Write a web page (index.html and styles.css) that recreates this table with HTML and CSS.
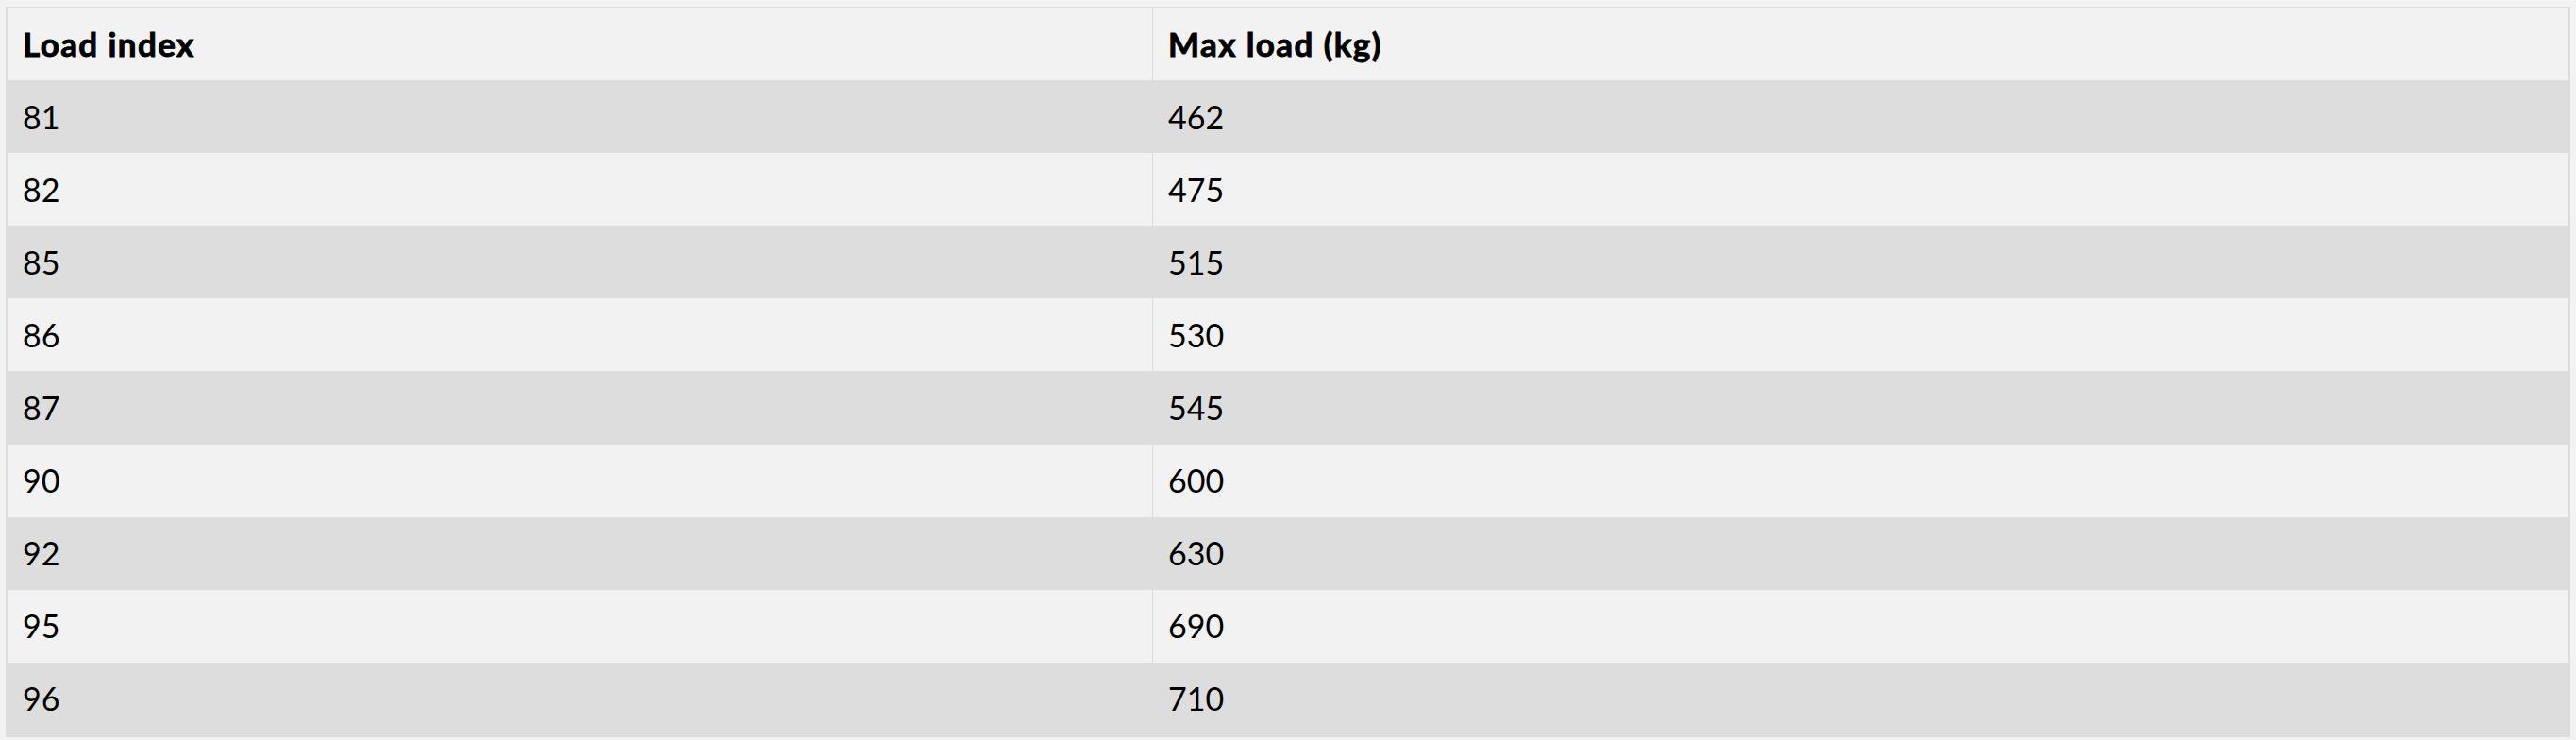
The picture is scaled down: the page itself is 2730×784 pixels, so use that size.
FILE: index.html
```html
<!DOCTYPE html>
<html lang="en">
<head>
<meta charset="utf-8">
<title>Load index</title>
<link rel="stylesheet" href="styles.css">
</head>
<body>
<table class="load-table">
  <colgroup>
    <col class="col-index">
    <col class="col-load">
  </colgroup>
  <thead>
    <tr><th>Load index</th><th>Max load (kg)</th></tr>
  </thead>
  <tbody>
    <tr><td>81</td><td>462</td></tr>
    <tr><td>82</td><td>475</td></tr>
    <tr><td>85</td><td>515</td></tr>
    <tr><td>86</td><td>530</td></tr>
    <tr><td>87</td><td>545</td></tr>
    <tr><td>90</td><td>600</td></tr>
    <tr><td>92</td><td>630</td></tr>
    <tr><td>95</td><td>690</td></tr>
    <tr><td>96</td><td>710</td></tr>
  </tbody>
</table>
</body>
</html>
```
FILE: styles.css
```css
html, body {
  margin: 0;
  padding: 0;
  background: #f2f2f2;
}
body {
  padding: 7px 0 0 6px;
  font-family: Lato, "Open Sans", "Liberation Sans", sans-serif;
  color: #000;
}
.load-table {
  width: 2718px;
  table-layout: fixed;
  border-collapse: separate;
  border-spacing: 0;
  border-top: 1px solid #dcdcdc;
  border-left: 2px solid #dcdcdc;
  border-right: 2px solid #dcdcdc;
  border-bottom: 2px solid #dcdcdc;
  font-size: 34px;
}
.col-index { width: 1213px; }
.load-table th,
.load-table td {
  height: 77.1px;
  padding: 0 16px;
  text-align: left;
  vertical-align: middle;
  line-height: 1;
  box-sizing: border-box;
}
.load-table th {
  font-weight: 700;
  font-size: 35px;
  letter-spacing: 1.4px;
  -webkit-text-stroke: 0.9px #000;
}
.load-table td { font-weight: 400; }
.load-table th + th,
.load-table td + td {
  border-left: 1px solid #dcdcdc;
}
.load-table tbody tr:nth-child(odd) {
  background: #dddddd;
}
.load-table tbody tr:nth-child(odd) td + td {
  border-left-color: #dddddd;
}
```
